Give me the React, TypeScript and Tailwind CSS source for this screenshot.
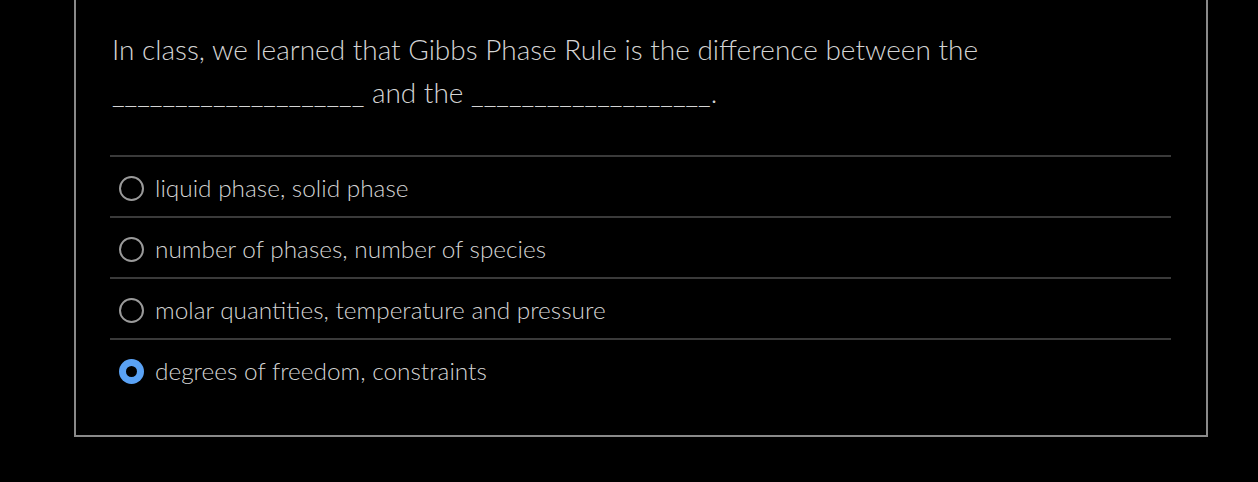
const options = [
  { label: "liquid phase, solid phase", checked: false },
  { label: "number of phases, number of species", checked: false },
  { label: "molar quantities, temperature and pressure", checked: false },
  { label: "degrees of freedom, constraints", checked: true },
];

function Radio({ checked }: { checked: boolean }) {
  if (checked) {
    return (
      <span className="flex h-[25px] w-[25px] shrink-0 items-center justify-center rounded-full bg-[#5aa2f5]">
        <span className="h-[11px] w-[11px] rounded-full bg-black" />
      </span>
    );
  }
  return <span className="h-[25px] w-[25px] shrink-0 rounded-full border-2 border-[#9a9a9a]" />;
}

export default function App() {
  return (
    <div className="h-[482px] w-[1258px] overflow-hidden bg-black font-['Lato','Noto_Sans',sans-serif] font-light">
      <div className="ml-[74px] w-[1134px] border-x-2 border-b-2 border-[#8a8a8a] pb-[36px] pl-[34px] pr-[35px] pt-[28px]">
        <p className="pl-[2px] text-[28px] leading-[43px] text-[#d4d4d4]">
          In class, we learned that Gibbs Phase Rule is the difference between the
          <br />
          ____________________ and the ___________________.
        </p>
        <div className="mt-[41px]">
          {options.map((o) => (
            <div
              key={o.label}
              className="flex h-[61px] items-center gap-[11px] border-t-2 border-[#3a3a3a] pl-[9px] pt-[3px]"
            >
              <Radio checked={o.checked} />
              <span className="text-[24.4px] text-[#d4d4d4]">{o.label}</span>
            </div>
          ))}
        </div>
      </div>
    </div>
  );
}
